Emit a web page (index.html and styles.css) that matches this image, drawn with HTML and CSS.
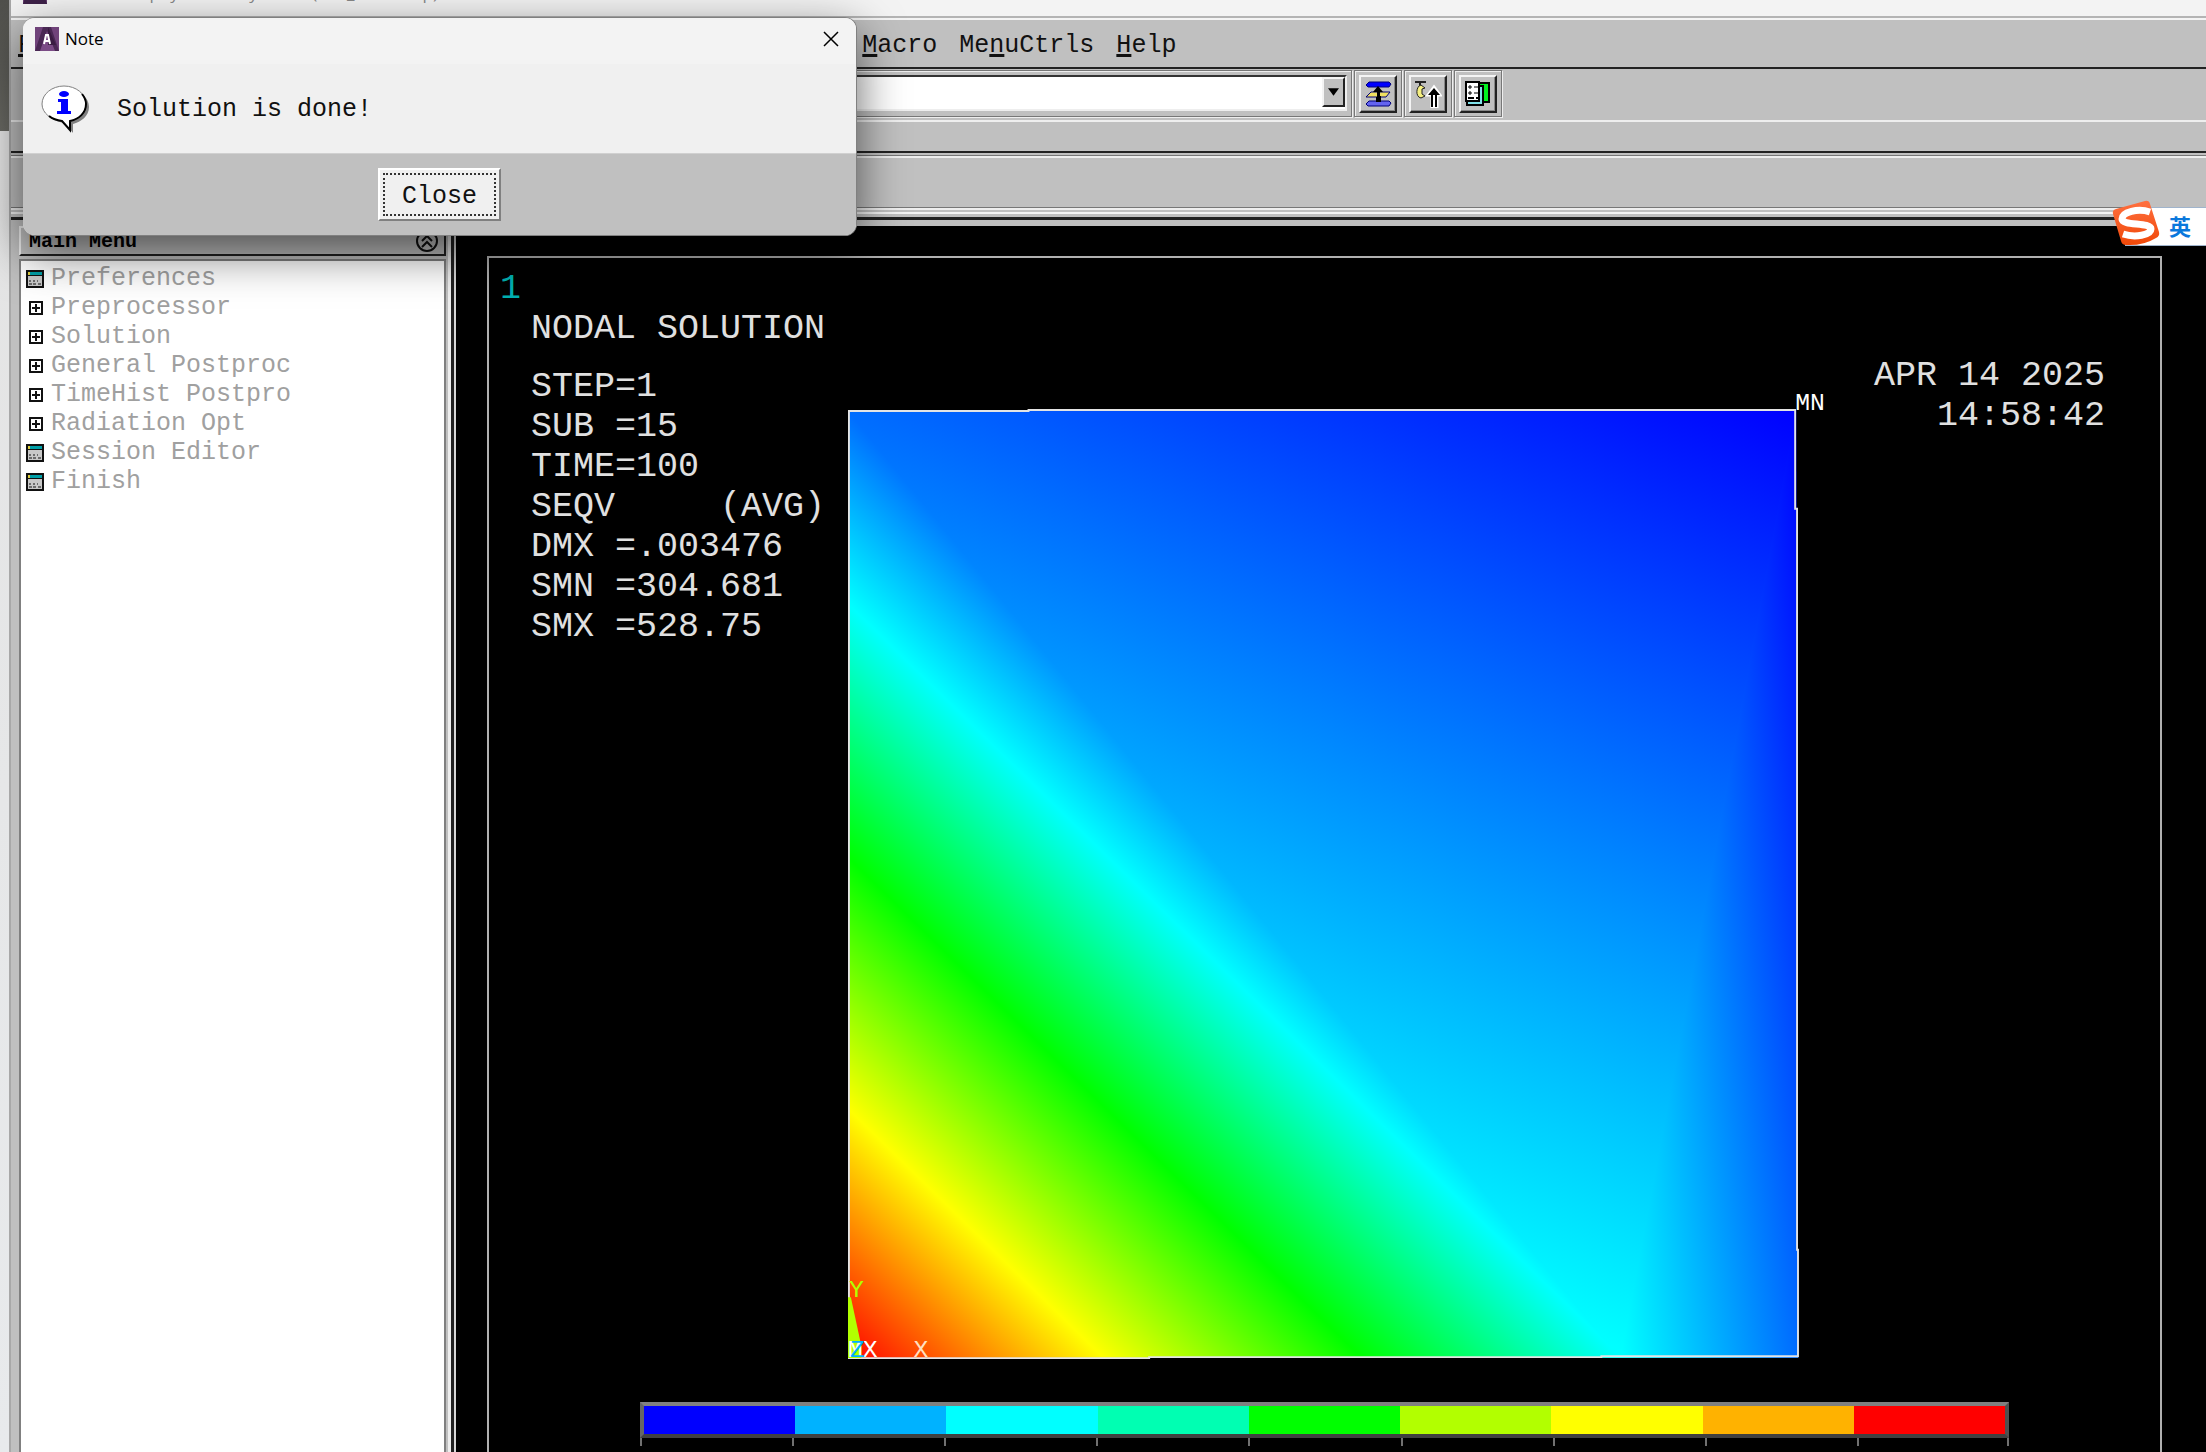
FILE: index.html
```html
<!DOCTYPE html>
<html lang="en">

<head>
  <meta charset="UTF-8">
  <meta name="viewport" content="width=device-width, initial-scale=1.0">
  <title>Utility Menu</title>
  <link rel="stylesheet" href="styles.css">
</head>

<body>
  <svg class="sprite">
    <symbol id="plus" viewBox="0 0 14 14"><path d="M1 1h12v12H1z" fill="#fff" stroke="#111" stroke-width="2"/><path d="M3 7h8M7 3v8" stroke="#111" stroke-width="2"/></symbol>
    <symbol id="form" viewBox="0 0 18 18">
      <rect x="1" y="1" width="16" height="16" fill="#c8c8c8" stroke="#111" stroke-width="2"/>
      <path d="M2 2h14v3H2z" fill="#00a0a8"/><path d="M2 2h2v3H2z" fill="#e0d040"/><path d="M2 5h14v1H2z" fill="#111"/>
      <path d="M3 11h2M7 11h2M11 11h1M3 14h3M7 14h3M12 14h3" stroke="#111" stroke-width="1"/>
    </symbol>
  </svg>

  <div class="backdrop"></div>
  <div class="app">
    <header class="titlebar">
      <svg class="app-icon" viewBox="0 0 24 24"><rect width="24" height="24" fill="#6b3f74"/><path d="M8 0h8l8 24H0z" fill="#3d2148"/></svg>
      <span>ANSYS Multiphysics Utility Menu (test_workshop)</span>
    </header>

    <nav class="menubar">
      <a href="#"><u>F</u>ile</a>
      <a href="#"><u>S</u>elect</a>
      <a href="#"><u>L</u>ist</a>
      <a href="#"><u>P</u>lot</a>
      <a href="#">Plot<u>C</u>trls</a>
      <a href="#"><u>W</u>orkPlane</a>
      <a href="#">Pa<u>r</u>ameters</a>
      <a href="#"><u>M</u>acro</a>
      <a href="#">Me<u>n</u>uCtrls</a>
      <a href="#"><u>H</u>elp</a>
    </nav>

    <div class="toolbar">
      <div class="cell combo-cell">
        <div class="combo">
          <input type="text" aria-label="Command">
          <button class="drop" aria-label="Show history"><svg viewBox="0 0 12 8"><path d="M0 0h12L6 8z"/></svg></button>
        </div>
      </div>
      <div class="cell">
        <button class="tool" aria-label="Raise hidden">
          <svg viewBox="0 0 28 28">
            <g stroke="#00007a" stroke-width="1">
              <path d="M5 2h20l2 2-2 3H4L2 5z" fill="#00f"/>
              <path d="M7 12h19l-4 5H2z" fill="#f0e060"/>
              <path d="M5 21h20l2 2-2 3H4l-2-2z" fill="#6464f0"/>
            </g>
            <path d="M14 6l5 6h-3v4h1v6h-5v-5h1v-5H9z"/>
          </svg>
        </button>
      </div>
      <div class="cell">
        <button class="tool" aria-label="Reset picking">
          <svg viewBox="0 0 28 28">
            <path d="M1 2h11M6 2v4" fill="none" stroke="#222" stroke-width="2"/>
            <path d="M7 5c-5 1-6 12 0 13l4-2-3-2V9l3-1z" fill="#f5ef80" stroke="#222"/>
            <path d="M18 28V15h-4l6-8 6 8h-3v13" fill="#fff" stroke="#fff" stroke-width="3"/>
            <path d="M14 15l6-7 6 7zM17 15h2v12h-2zM21 15h2v12h-2z"/>
          </svg>
        </button>
      </div>
      <div class="cell">
        <button class="tool" aria-label="Contact manager">
          <svg viewBox="0 0 28 28">
            <path d="M15 3h10v19H15z" fill="#00f020" stroke="#000" stroke-width="2"/>
            <path d="M8 6h11v19H3v-4z" fill="#7fe0e8" stroke="#000" stroke-width="2"/>
            <path d="M2 2h13v19H2z" fill="#fff" stroke="#000" stroke-width="2"/>
            <path d="M4 7h4M6 5v4M10 7h4M4 13h4M6 11v4M10 13h4" stroke="#000" stroke-width="1" fill="none"/>
            <path d="M4 17h6v2H4zM12 17h2v2h-2z"/>
          </svg>
        </button>
      </div>
    </div>
    <div class="band band-small"></div>
    <div class="band band-large"></div>
    <div class="groove"></div>

    <div class="workspace">
      <aside class="sidebar">
        <div class="panel-head">
          <span>Main Menu</span>
          <button class="collapse" aria-label="Collapse">
            <svg viewBox="0 0 24 24" fill="none" stroke="#111" stroke-width="2"><circle cx="12" cy="12" r="10"/><path d="M7 12l5-5 5 5M7 18l5-5 5 5"/></svg>
          </button>
        </div>
        <ul class="tree">
          <li><svg class="form"><use href="#form"/></svg><a href="#">Preferences</a></li>
          <li><svg class="plus"><use href="#plus"/></svg><a href="#">Preprocessor</a></li>
          <li><svg class="plus"><use href="#plus"/></svg><a href="#">Solution</a></li>
          <li><svg class="plus"><use href="#plus"/></svg><a href="#">General Postproc</a></li>
          <li><svg class="plus"><use href="#plus"/></svg><a href="#">TimeHist Postpro</a></li>
          <li><svg class="plus"><use href="#plus"/></svg><a href="#">Radiation Opt</a></li>
          <li><svg class="form"><use href="#form"/></svg><a href="#">Session Editor</a></li>
          <li><svg class="form"><use href="#form"/></svg><a href="#">Finish</a></li>
        </ul>
      </aside>

      <main class="graphics">
        <div class="frame">
          <div class="view">
            <div class="info">
              <p class="window-no">1</p>
              <p class="heading">NODAL SOLUTION</p>
              <pre>STEP=1
SUB =15
TIME=100
SEQV     (AVG)
DMX =.003476
SMN =304.681
SMX =528.75</pre>
            </div>

            <svg class="plot" viewBox="0 0 1000 998">
              <defs>
                <linearGradient id="scale">
                  <stop offset="0" stop-color="#f00"/>
                  <stop offset=".23" stop-color="#ff0"/>
                  <stop offset=".46" stop-color="#0f0"/>
                  <stop offset=".692" stop-color="#0ff"/>
                  <stop offset="1" stop-color="#00f"/>
                </linearGradient>
                <linearGradient id="t1" href="#scale" gradientUnits="userSpaceOnUse" x1="0" y1="1000" x2="575" y2="410"/>
                <linearGradient id="t2" href="#scale" gradientUnits="userSpaceOnUse" x1="-321" y1="2885" x2="1000" y2="0"/>
                <linearGradient id="t3" href="#scale" gradientUnits="userSpaceOnUse" x1="-21" y1="139" x2="1000" y2="0"/>
              </defs>
              <!-- one linear field per triangle, the first one runs under the other two -->
              <path d="M0 0H998L1000 998H0z" fill="url(#t2)"/>
              <path d="M0 0L813 998H0z" fill="url(#t1)"/>
              <path d="M998 0L1000 998H813z" fill="url(#t3)"/>
              <path d="M1 998V1H190V0H997V104H999V884H1000V996H793V997H317V998z" fill="none" stroke="#e4e4e4" stroke-width="2"/>
              <path d="M0 934L3 934L14 985V998H0z" fill="#b2ff00"/>
              <text x="997" y="0">MN</text>
              <text x="0" y="997">MX</text>
              <text class="axis-y" x="1" y="934">Y</text>
              <text class="axis-x" x="69" y="997">X</text>
              <text class="axis-z" x="2" y="997">Z</text>
            </svg>

            <div class="stamp">APR 14 2025<br>14:58:42</div>
          </div>

          <div class="legend">
            <div class="bar">
              <i class="c1"></i><i class="c2"></i><i class="c3"></i><i class="c4"></i><i class="c5"></i><i class="c6"></i><i class="c7"></i><i class="c8"></i><i class="c9"></i>
            </div>
            <div class="ticks">
              <i></i><i></i><i></i><i></i><i></i><i></i><i></i><i></i><i></i>
            </div>
          </div>
        </div>
      </main>
    </div>
  </div>

  <div class="ime">
    <svg viewBox="0 0 48 46">
      <defs><linearGradient id="ime" x2="0" y2="1"><stop stop-color="#ff7040"/><stop offset="1" stop-color="#f04808"/></linearGradient></defs>
      <path d="M4 9L33 1q4-1 5 3l9 28q1 4-3 6-13 8-30 7-4 0-5-4L1 14q-1-4 3-5z" fill="url(#ime)"/>
      <path d="M38 12C26 8 10 12 10 19c0 7 29 3 29 10 0 6-16 9-28 5" fill="none" stroke="#fff" stroke-width="7"/>
    </svg>
    <span lang="zh">英</span>
  </div>

  <section class="dialog" role="dialog" aria-label="Note">
    <div class="dialog-title">
      <svg class="app-icon" viewBox="0 0 24 24">
        <rect width="24" height="24" fill="#70437a"/>
        <path d="M8 0h8l8 24H0z" fill="#4a2854"/><path d="M12 4l8 20H5z" fill="#7b4c86"/><path d="M13 0l8 18h-8z" fill="#3a1c42"/>
        <path d="M9 17l2-9h2l2 9M10 14h4" fill="none" stroke="#fff" stroke-width="2"/>
      </svg>
      <span>Note</span>
      <button class="close-x" aria-label="Close window"><svg viewBox="0 0 16 16"><path d="M1 1l14 14M15 1L1 15" stroke="#000" stroke-width="1.5"/></svg></button>
    </div>
    <div class="dialog-body">
      <svg class="note-icon" viewBox="0 0 48 48">
        <path d="M26 4c12 0 22 8 22 18 0 9-8 15-16 17v9l-8-10C12 37 6 30 6 22 6 12 14 4 26 4z" fill="#808080"/>
        <path d="M23 1c12 0 22 8 22 18 0 9-7 15-16 17v9l-8-9C10 35 1 28 1 19 1 9 11 1 23 1z" fill="#fff" stroke="#808080"/>
        <path d="M41 9q4 5 4 10c0 9-7 15-16 17v9l-8-9q-8-1-13-5" fill="none" stroke="#000" stroke-width="2"/>
        <ellipse cx="23" cy="9" rx="5" ry="3" fill="#00f"/>
        <path d="M17 14h10v12h3v3H16v-3h4v-9h-3z" fill="#00f"/>
      </svg>
      <p>Solution is done!</p>
    </div>
    <div class="dialog-foot">
      <button class="close">Close</button>
    </div>
  </section>
</body>

</html>
```

FILE: styles.css
```css
* {
  box-sizing: border-box;
}
body {
  margin: 0;
  height: 100vh;
  display: flex;
  overflow: hidden;
  background: #c0c0c0;
  font-family: "Liberation Mono", "Courier New", monospace;
  font-size: 25px;
  position: relative;
}
button {
  font: inherit;
  padding: 0;
}
a {
  color: inherit;
  text-decoration: none;
}
p, pre, ul {
  margin: 0;
  padding: 0;
  font-family: inherit;
}
svg {
  display: block;
}
.sprite {
  display: none;
}

.backdrop {
  width: 11px;
  flex: none;
  border-right: 2px solid #a8a8a8;
  background: linear-gradient(#50504c 0, #686862 131px, #e4e4e4 131px, #e8eaec 100%);
}
.app {
  flex: 1;
  min-width: 0;
  display: flex;
  flex-direction: column;
}
.app-icon {
  width: 24px;
  height: 24px;
  flex: none;
}

/* window title, menus */
.titlebar {
  height: 16px;
  flex: none;
  display: flex;
  align-items: flex-end;
  gap: 6px;
  padding: 0 12px 12px;
  background: #f3f3f3;
  color: #888;
  font: 17px/22px "Open Sans", sans-serif;
}
.menubar {
  height: 53px;
  flex: none;
  display: flex;
  align-items: center;
  gap: 22px;
  padding: 6px 0 0 7px;
  border-top: 2px solid #b4b4b4;
  border-bottom: 2px solid #222;
  box-shadow: inset 0 2px #f4f4f4;
  color: #111;
}
.menubar u {
  text-decoration-thickness: 3px;
  text-underline-offset: 2px;
}

.toolbar {
  height: 51px;
  flex: none;
  display: flex;
  align-items: flex-start;
  gap: 2px;
  padding: 1px 4px 0 12px;
}
.cell {
  height: 47px;
  padding: 4px;
  border: 1px solid #777;
  box-shadow: inset 1px 1px #eee, 1px 1px #eee;
}
.combo-cell {
  width: 61%;
}
.combo {
  height: 36px;
  display: flex;
  border: 2px solid;
  border-color: #333 #eee #eee #333;
  background: #fff;
}
.combo input {
  flex: 1;
  border: 0;
  outline: 0;
  background: #fff;
  font: inherit;
}
.drop, .tool {
  display: flex;
  align-items: center;
  justify-content: center;
  background: #c0c0c0;
  border: 2px solid;
  border-color: #f4f4f4 #222 #222 #f4f4f4;
}
.drop {
  width: 23px;
  height: 30px;
}
.drop svg {
  width: 11px;
  height: 8px;
}
.tool {
  width: 38px;
  height: 38px;
  box-shadow: inset -1px -1px #888;
}
.tool svg {
  width: 28px;
  height: 28px;
}
.band {
  flex: none;
  border-top: 2px solid #eee;
  border-bottom: 2px solid #222;
}
.band-small {
  height: 33px;
}
.band-large {
  height: 53px;
  margin-top: 2px;
  border-top: 1px solid #777;
  border-bottom: 1px solid #777;
  box-shadow: inset 0 2px #eee, 0 2px #eee;
}
.groove {
  height: 8px;
  flex: none;
  margin-top: 4px;
  border-top: 2px solid #f4f4f4;
  border-bottom: 3px solid #222;
}

/* main menu tree */
.workspace {
  flex: 1;
  min-height: 0;
  display: flex;
  padding-top: 6px;
}
.sidebar {
  width: 445px;
  flex: none;
  display: flex;
  flex-direction: column;
  gap: 3px;
  padding: 0 8px;
  border-right: 2px solid #d8d8d8;
  box-shadow: inset -3px 0 #222, inset -6px 0 #eee;
}
.panel-head {
  height: 30px;
  display: flex;
  align-items: center;
  justify-content: space-between;
  padding: 0 5px 0 8px;
  border: 2px solid;
  border-color: #eee #222 #222 #eee;
  font-size: 20px;
  font-weight: bold;
}
.collapse {
  border: 0;
  background: none;
}
.collapse svg {
  width: 24px;
  height: 24px;
}
.tree {
  flex: 1;
  padding: 3px 5px;
  background: #fff;
  border: 2px solid #808080;
  border-bottom: 0;
  list-style: none;
  color: #a0a0a0;
}
.tree li {
  display: flex;
  align-items: center;
  gap: 7px;
  height: 29px;
}
.form {
  width: 18px;
  height: 18px;
}
.plus {
  width: 14px;
  height: 14px;
  margin: 0 1px 0 3px;
}

/* graphics window */
.graphics {
  flex: 1;
  min-width: 0;
  overflow: hidden;
  padding: 30px 44px 0 31px;
  background: #000;
  color: #e0e0e0;
}
.frame {
  height: 100%;
  border: 2px solid #b0b0b0;
  border-bottom: 0;
}
.view {
  display: grid;
  grid-template-columns: 359px 1fr 362px;
  align-items: start;
}
.info, .stamp {
  font-size: 35px;
  line-height: 40px;
}
.info {
  padding: 11px 0 0 42px;
}
.window-no {
  margin-left: -31px;
  color: #00b2b2;
}
.heading {
  margin-bottom: 18px;
}
.plot {
  width: 100%;
  margin-top: 152px;
  overflow: visible;
  font-size: 26px;
  fill: #fff;
}
.axis-y {
  fill: #b2ff00;
}
.axis-x {
  fill: #ffe0c0;
}
.axis-z {
  fill: #00b2ff;
}
.stamp {
  padding: 98px 55px 0 0;
  text-align: right;
}
.legend {
  margin-top: 44px;
  padding: 0 151px;
}
.bar {
  height: 36px;
  display: grid;
  grid-template-columns: repeat(9, 1fr);
  border: 4px solid;
  border-color: #808080 #505050 #404040 #666;
}
.ticks {
  height: 8px;
  display: grid;
  grid-template-columns: repeat(9, 1fr);
}
.ticks i {
  border-left: 2px solid #707070;
}
.ticks i:last-child {
  border-right: 2px solid #707070;
}
.c1 { background: #00f; }
.c2 { background: #00b2ff; }
.c3 { background: #0ff; }
.c4 { background: #00ffb2; }
.c5 { background: #0f0; }
.c6 { background: #b2ff00; }
.c7 { background: #ff0; }
.c8 { background: #ffb200; }
.c9 { background: #f00; }

/* input method badge, floats over the window */
.ime {
  position: absolute;
  top: 207px;
  right: 0;
  width: 81px;
  height: 39px;
  display: flex;
  align-items: center;
  gap: 9px;
  background: #fff;
  border: 1px solid #a0b4cc;
  border-width: 1px 0;
  color: #0a78dc;
  font: bold 22px/32px "Noto Sans CJK SC", sans-serif;
}
.ime svg {
  width: 48px;
  height: 46px;
  flex: none;
  margin: -8px 0 0 -13px;
}
.ime span {
  padding-bottom: 4px;
}

.dialog {
  position: absolute;
  top: 17px;
  left: 23px;
  width: 834px;
  overflow: hidden;
  border: 1px solid #808080;
  border-left-width: 0;
  border-radius: 12px;
  background: #f0f0f0;
  box-shadow: 0 16px 48px rgba(0, 0, 0, .6);
}
.dialog-title {
  height: 46px;
  display: flex;
  align-items: center;
  gap: 6px;
  padding: 0 17px 4px 12px;
  background: #f3f3f3;
  font: 17px/22px "Open Sans", sans-serif;
}
.close-x {
  margin-left: auto;
  border: 0;
  background: none;
}
.close-x svg {
  width: 16px;
  height: 16px;
}
.dialog-body {
  height: 90px;
  display: flex;
  align-items: center;
  gap: 28px;
  padding-left: 18px;
  border-bottom: 1px solid #d0d0d0;
  color: #111;
}
.dialog-body p {
  padding-top: 2px;
}
.note-icon {
  width: 48px;
  height: 48px;
}
.dialog-foot {
  height: 81px;
  display: flex;
  align-items: center;
  justify-content: center;
  background: #c0c0c0;
}
.close {
  width: 123px;
  height: 53px;
  padding-top: 4px;
  border: 2px solid;
  border-color: #fff #808080 #808080 #fff;
  background: #f0f0f0;
  color: #111;
  outline: 2px dotted #333;
  outline-offset: -7px;
}
```
